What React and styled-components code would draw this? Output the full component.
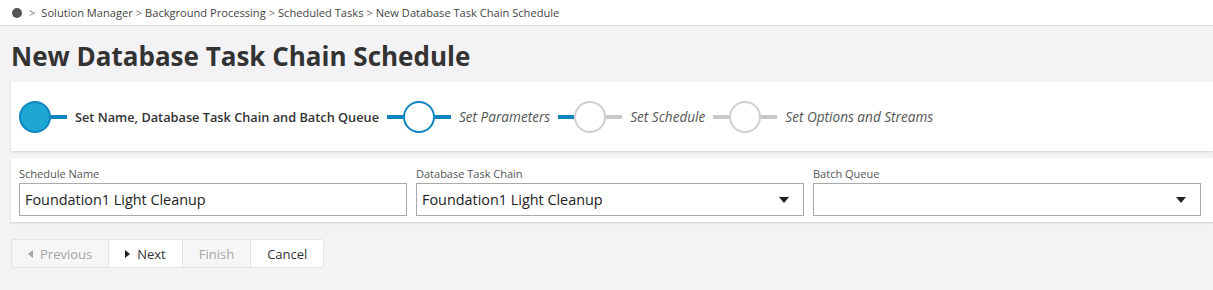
import React from "react";
import styled, { createGlobalStyle } from "styled-components";

const GlobalStyle = createGlobalStyle`
    html, body {
        margin: 0;
        padding: 0;
        background: #f3f2f5;
        font-family: "Open Sans", "Liberation Sans", sans-serif;
        color: #333;
    }
`;

const steps = [
    { label: "Set Name, Database Task Chain and Batch Queue", state: "current" },
    { label: "Set Parameters", state: "next" },
    { label: "Set Schedule", state: "todo" },
    { label: "Set Options and Streams", state: "todo" },
];

const crumbs = ["Solution Manager", "Background Processing", "Scheduled Tasks", "New Database Task Chain Schedule"];

const fields = [
    { label: "Schedule Name", value: "Foundation1 Light Cleanup", select: false },
    { label: "Database Task Chain", value: "Foundation1 Light Cleanup", select: true },
    { label: "Batch Queue", value: "", select: true },
];

const App = () => {
    return (
        <Page>
            <GlobalStyle />
            <Breadcrumb>
                <HomeDot />
                <FirstSep>&gt;</FirstSep>
                {crumbs.map((c, i) => (
                    <React.Fragment key={c}>
                        {i > 0 && <Sep>&gt;</Sep>}
                        <Crumb>{c}</Crumb>
                    </React.Fragment>
                ))}
            </Breadcrumb>
            <Content>
                <Title>New Database Task Chain Schedule</Title>
                <WizardCard>
                    {steps.map((s, i) => {
                        const before = i === 0 ? null : steps[i - 1].state !== "todo" ? "blue" : "grey";
                        const after = s.state === "todo" ? "grey" : "blue";
                        return (
                            <Step key={s.label}>
                                {before && <Line color={before} />}
                                <Circle state={s.state} />
                                <Line color={after} />
                                <StepLabel state={s.state}>{s.label}</StepLabel>
                            </Step>
                        );
                    })}
                </WizardCard>
                <FormCard>
                    {fields.map((f) => (
                        <Field key={f.label}>
                            <Label>{f.label}</Label>
                            <InputBox>
                                <InputText>{f.value}</InputText>
                                {f.select && <Caret />}
                            </InputBox>
                        </Field>
                    ))}
                </FormCard>
                <ButtonGroup>
                    <Button disabled>
                        <Arrow left disabled />
                        Previous
                    </Button>
                    <Button>
                        <Arrow />
                        Next
                    </Button>
                    <Button disabled>Finish</Button>
                    <Button>Cancel</Button>
                </ButtonGroup>
            </Content>
        </Page>
    );
};

export default App;

const Page = styled.div`
    width: 1213px;
    height: 290px;
    overflow: hidden;
`;

const Breadcrumb = styled.div`
    display: flex;
    align-items: center;
    height: 25px;
    padding-left: 12px;
    background: #fff;
    border-bottom: 1px solid #dedede;
    font-size: 11.1px;
    color: #444;
`;

const HomeDot = styled.span`
    width: 10px;
    height: 10px;
    border-radius: 50%;
    background: #555;
    margin-right: 7px;
`;

const Sep = styled.span`
    color: #777;
    margin: 0 3px;
`;

const FirstSep = styled(Sep)`
    margin: 0 6px 0 0;
`;

const Crumb = styled.span`
    color: #444;
`;

const Content = styled.div`
    padding-left: 11px;
`;

const Title = styled.h1`
    margin: 0;
    padding: 12px 0 0 0;
    height: 44px;
    font-size: 26px;
    font-weight: 700;
    color: #333;
`;

const WizardCard = styled.div`
    display: flex;
    align-items: center;
    height: 69px;
    padding-left: 8px;
    background: #fff;
    box-shadow: 0 1px 2px rgba(0, 0, 0, 0.15);
`;

const Step = styled.div`
    display: flex;
    align-items: center;
`;

const Line = styled.span`
    width: 16px;
    height: 4px;
    background: ${(p) => (p.color === "blue" ? "#0f85bf" : "#c8c8c8")};
`;

const Circle = styled.span`
    box-sizing: border-box;
    width: 32px;
    height: 32px;
    border-radius: 50%;
    border: 2px solid ${(p) => (p.state === "todo" ? "#cfcfcf" : "#0f85bf")};
    background: ${(p) => (p.state === "current" ? "#1ea7d2" : "#fff")};
`;

const StepLabel = styled.span`
    margin: 0 8px;
    font-size: ${(p) => (p.state === "current" ? "12.75px" : "13.6px")};
    font-weight: ${(p) => (p.state === "current" ? 600 : 400)};
    font-style: ${(p) => (p.state === "current" ? "normal" : "italic")};
    color: ${(p) => (p.state === "current" ? "#333" : "#555")};
`;

const FormCard = styled.div`
    display: grid;
    grid-template-columns: 388px 388px 388px;
    column-gap: 9px;
    margin-top: 7px;
    height: 64px;
    padding: 0 8px;
    background: #fff;
    box-shadow: 0 1px 2px rgba(0, 0, 0, 0.15);
`;

const Field = styled.div`
    display: flex;
    flex-direction: column;
`;

const Label = styled.div`
    font-size: 11px;
    color: #555;
    padding-top: 8px;
    height: 17px;
`;

const InputBox = styled.div`
    box-sizing: border-box;
    display: flex;
    align-items: center;
    height: 33px;
    border: 1px solid #a9a9a9;
    padding: 0 14px 0 5px;
`;

const InputText = styled.span`
    flex: 1;
    font-size: 14.4px;
    color: #222;
`;

const Caret = styled.span`
    width: 0;
    height: 0;
    border-left: 5px solid transparent;
    border-right: 5px solid transparent;
    border-top: 6px solid #222;
`;

const ButtonGroup = styled.div`
    display: inline-flex;
    margin-top: 17px;
    border: 1px solid #e3e3e3;
    border-radius: 3px;
    overflow: hidden;
`;

const Button = styled.div`
    display: flex;
    align-items: center;
    height: 27px;
    padding: 0 16px;
    font-size: 13px;
    background: ${(p) => (p.disabled ? "#f6f6f7" : "#fff")};
    color: ${(p) => (p.disabled ? "#a5a5a5" : "#333")};
    border-left: 1px solid #e3e3e3;
    &:first-child {
        border-left: none;
    }
`;

const Arrow = styled.span`
    width: 0;
    height: 0;
    margin-right: 7px;
    border-top: 4px solid transparent;
    border-bottom: 4px solid transparent;
    ${(p) =>
        p.left
            ? `border-right: 5px solid ${p.disabled ? "#a5a5a5" : "#333"};`
            : `border-left: 5px solid #222;`}
`;
